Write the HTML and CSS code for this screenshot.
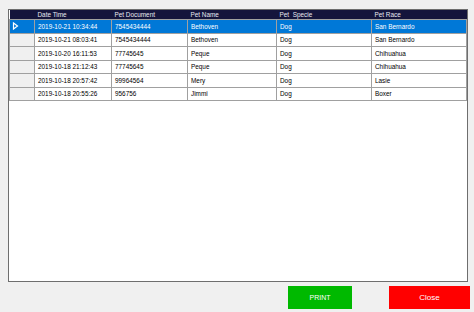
FILE: index.html
```html
<!DOCTYPE html>
<html lang="en">
<head>
    <meta charset="UTF-8">
    <title>Pet History</title>
    <link rel="stylesheet" href="styles.css">
</head>
<body>
<div class="window">
    <div class="grid">
        <table>
            <colgroup>
                <col class="c-head">
                <col class="c-date">
                <col class="c-doc">
                <col class="c-name">
                <col class="c-specie">
                <col class="c-race">
            </colgroup>
            <thead>
                <tr>
                    <th></th>
                    <th>Date Time</th>
                    <th>Pet Document</th>
                    <th>Pet Name</th>
                    <th>Pet&nbsp; Specie</th>
                    <th>Pet Race</th>
                </tr>
            </thead>
            <tbody>
                <tr class="selected">
                    <td class="rowhead">
                        <svg width="7" height="8" viewBox="0 0 7 8"><path d="M1.5 1 L5.5 4 L1.5 7 Z" fill="none" stroke="#fff" stroke-width="1.2"/></svg>
                    </td>
                    <td>2019-10-21 10:34:44</td>
                    <td>7545434444</td>
                    <td>Bethoven</td>
                    <td>Dog</td>
                    <td>San Bernardo</td>
                </tr>
                <tr>
                    <td class="rowhead"></td>
                    <td>2019-10-21 08:03:41</td>
                    <td>7545434444</td>
                    <td>Bethoven</td>
                    <td>Dog</td>
                    <td>San Bernardo</td>
                </tr>
                <tr>
                    <td class="rowhead"></td>
                    <td>2019-10-20 16:11:53</td>
                    <td>77745645</td>
                    <td>Peque</td>
                    <td>Dog</td>
                    <td>Chihuahua</td>
                </tr>
                <tr>
                    <td class="rowhead"></td>
                    <td>2019-10-18 21:12:43</td>
                    <td>77745645</td>
                    <td>Peque</td>
                    <td>Dog</td>
                    <td>Chihuahua</td>
                </tr>
                <tr>
                    <td class="rowhead"></td>
                    <td>2019-10-18 20:57:42</td>
                    <td>99964564</td>
                    <td>Mery</td>
                    <td>Dog</td>
                    <td>Lasie</td>
                </tr>
                <tr>
                    <td class="rowhead"></td>
                    <td>2019-10-18 20:55:26</td>
                    <td>956756</td>
                    <td>Jimmi</td>
                    <td>Dog</td>
                    <td>Boxer</td>
                </tr>
            </tbody>
        </table>
    </div>

    <div class="actions">
        <button class="btn btn-print">PRINT</button>
        <button class="btn btn-close">Close</button>
    </div>
</div>
</body>
</html>
```

FILE: styles.css
```css
body {
    margin: 0;
    background: #f0f0f0;
    font-family: "Liberation Sans", Arial, sans-serif;
}

.window {
    width: 474px;
    height: 312px;
    padding: 9px 6px 0 8px;
    box-sizing: border-box;
}

.grid {
    height: 273px;
    background: #ffffff;
    border: 1px solid #6e6e6e;
    box-sizing: border-box;
}

table {
    border-collapse: collapse;
    table-layout: fixed;
    width: 457px;
    font-size: 6.4px;
}

.c-head { width: 25px; }
.c-date { width: 77px; }
.c-doc { width: 76px; }
.c-name { width: 89px; }
.c-specie { width: 95px; }
.c-race { width: 95px; }

th {
    height: 9px;
    padding: 0 3px;
    background: #14143c;
    color: #e8e8f0;
    font-weight: normal;
    text-align: left;
    white-space: nowrap;
    overflow: hidden;
}

td {
    height: 13.5px;
    padding: 0 3px;
    border: 1px solid #a0a0a0;
    color: #000;
    white-space: nowrap;
    overflow: hidden;
    box-sizing: border-box;
}

td.rowhead {
    background: #f0f0f0;
    border-color: #a0a0a0;
    padding: 0 2px;
}

td.rowhead svg {
    display: block;
}

tr.selected td {
    background: #0078d7;
    color: #ffffff;
}

.actions {
    display: flex;
    justify-content: flex-end;
    padding-top: 4px;
    gap: 37px;
    margin-right: -2px;
}

.btn {
    height: 23px;
    border: none;
    color: #ffffff;
    font-family: "Liberation Sans", Arial, sans-serif;
    padding: 0;
}

.btn-print {
    width: 64px;
    background: #00b900;
    font-size: 7px;
}

.btn-close {
    width: 81px;
    background: #ff0000;
    font-size: 8px;
}
```
